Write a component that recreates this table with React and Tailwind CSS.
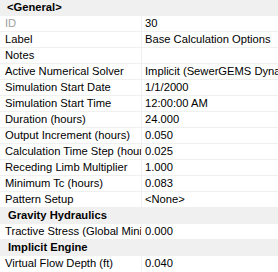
const ROWS = [
  { label: 'ID', value: '30', muted: true },
  { label: 'Label', value: 'Base Calculation Options' },
  { label: 'Notes', value: '' },
  { label: 'Active Numerical Solver', value: 'Implicit (SewerGEMS Dynamic Wave)' },
  { label: 'Simulation Start Date', value: '1/1/2000' },
  { label: 'Simulation Start Time', value: '12:00:00 AM' },
  { label: 'Duration (hours)', value: '24.000' },
  { label: 'Output Increment (hours)', value: '0.050' },
  { label: 'Calculation Time Step (hours)', value: '0.025' },
  { label: 'Receding Limb Multiplier', value: '1.000' },
  { label: 'Minimum Tc (hours)', value: '0.083' },
  { label: 'Pattern Setup', value: '<None>' },
  { category: 'Gravity Hydraulics' },
  { label: 'Tractive Stress (Global Minimum)', value: '0.000' },
  { category: 'Implicit Engine' },
  { label: 'Virtual Flow Depth (ft)', value: '0.040' },
];

function Row({ row }) {
  if (row.category) {
    return (
      <div className="h-[16px] border-t border-[#f0f0f0] bg-[#f0f0f0] pl-[8px] font-bold leading-[15px] text-black whitespace-nowrap">
        {row.category}
      </div>
    );
  }
  return (
    <div className="flex h-[16px] border-t border-[#f0f0f0] leading-[15px]">
      <div
        className={[
          'w-[141px] shrink-0 overflow-hidden whitespace-nowrap pl-[5px]',
          row.muted ? 'text-[#a0a0a0]' : 'text-black',
        ].join(' ')}
      >
        {row.label}
      </div>
      <div className="w-px shrink-0 bg-[#f0f0f0]" />
      <div className="flex-1 overflow-hidden whitespace-nowrap pl-[3px] text-black">{row.value}</div>
    </div>
  );
}

export default function App() {
  return (
    <div className="w-[278px] h-[272px] overflow-hidden bg-white text-[11.2px] font-['Liberation_Sans',Arial,sans-serif]">
      {/* Section header */}
      <div className="h-[15px] bg-[#f0f0f0] pl-[7px] font-bold leading-[15px] text-black">&lt;General&gt;</div>
      {ROWS.map((r, i) => (
        <Row key={i} row={r} />
      ))}
    </div>
  );
}
